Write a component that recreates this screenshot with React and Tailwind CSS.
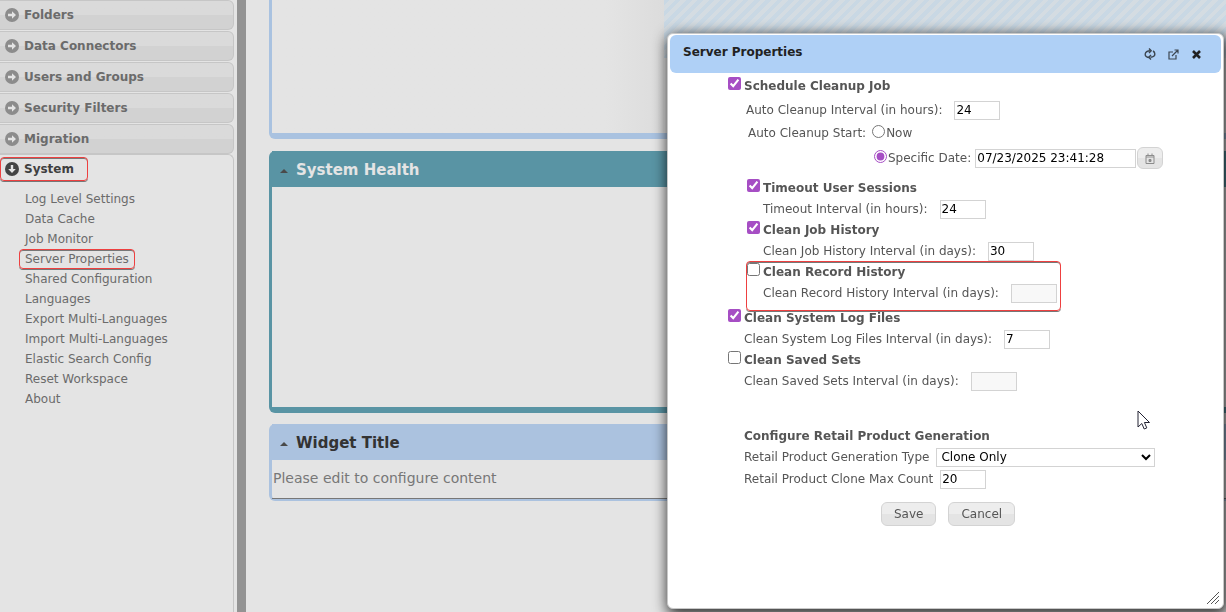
import { useState } from 'react';

const sections = ['Folders', 'Data Connectors', 'Users and Groups', 'Security Filters', 'Migration'];

const systemLinks = [
  'Log Level Settings',
  'Data Cache',
  'Job Monitor',
  'Server Properties',
  'Shared Configuration',
  'Languages',
  'Export Multi-Languages',
  'Import Multi-Languages',
  'Elastic Search Config',
  'Reset Workspace',
  'About',
];

const inputStyle = 'h-[19px] border border-[#d3d3d3] bg-white pl-px text-black outline-none disabled:bg-[#f8f8f8]';
const buttonStyle =
  'h-6 rounded-md border border-[#d3d3d3] bg-linear-to-b from-[#ededed] from-50% to-[#e4e4e4] to-50% px-3 text-[#555555]';

function CircleArrow({ down }) {
  return (
    <svg viewBox="0 0 14 14" className={down ? 'size-3.5 rotate-90 text-[#444444]' : 'size-3.5 text-[#8c8c8c]'}>
      <circle cx="7" cy="7" r="7" fill="currentColor" />
      <path d="M3 5.8h4V3.2L11 7l-4 3.8V8.2H3z" fill="#e4e4e4" />
    </svg>
  );
}

function Sidebar() {
  return (
    <nav className="w-[234px] shrink-0 text-[#6b6b6b]">
      {sections.map((name) => (
        <button
          key={name}
          type="button"
          className="mb-px flex h-[30px] w-full items-center gap-[5px] rounded-r-md border border-l-0 border-[#c6c6c6] bg-linear-to-b from-[#dadada] from-50% to-[#d2d2d2] to-50% pl-[5px] font-bold"
        >
          <CircleArrow />
          {name}
        </button>
      ))}
      <section className="-mt-px min-h-[480px] rounded-tr-md border-t border-r border-[#c6c6c6] pt-0.5">
        <button
          type="button"
          className="flex h-6 w-[88px] items-center gap-[5px] rounded-sm border border-[#ee4040] pl-1 font-bold text-[#3f3f3f] shadow-[inset_0_1px_0_#777777,0_1px_0_#777777]"
        >
          <CircleArrow down />
          System
        </button>
        <ul className="pt-2 pl-[19px]">
          {systemLinks.map((name) => (
            <li key={name} className="flex h-5">
              <a
                href="#"
                className={
                  name === 'Server Properties'
                    ? 'flex items-center rounded-sm border border-[#ee4040] px-[5px] shadow-[inset_0_1px_0_#777777,0_1px_0_#777777]'
                    : 'flex items-center border border-transparent px-[5px]'
                }
              >
                {name}
              </a>
            </li>
          ))}
        </ul>
      </section>
    </nav>
  );
}

function WidgetTitle({ children }) {
  return (
    <h2 className="flex h-9 items-center gap-2 pt-1 pl-2 text-[15px] font-bold">
      <svg viewBox="0 0 8 5" className="h-[5px] w-2">
        <path d="M4 0l4 4H0z" fill="#4a4a4a" />
      </svg>
      {children}
    </h2>
  );
}

function Dashboard() {
  return (
    <main className="min-w-0 flex-1 pl-[23px]">
      <div className="flex h-[139px] rounded-bl-md border-b-[6px] border-l-[3px] border-[#a9c2e0]">
        <div className="flex-1 bg-linear-to-r from-[#e4e4e4] from-85% to-[#dcdcdc]" />
        <div className="h-[58px] w-[562px] bg-[repeating-linear-gradient(135deg,#c9d8e4_0px,#c9d8e4_4px,#d4dce2_4px,#d4dce2_8px)]" />
      </div>
      <section className="mt-3 flex h-[262px] flex-col rounded-l-md border-b-[6px] border-l-[3px] border-[#5994a4] bg-[#e4e4e4]">
        <div className="bg-[#5994a4] text-[#e4e4e4]">
          <WidgetTitle>System Health</WidgetTitle>
        </div>
      </section>
      <section className="mt-[11px] rounded-l-md border-b-2 border-l-[3px] border-[#abc2df] bg-[#e4e4e4]">
        <div className="bg-[#abc2df] text-[#333333]">
          <WidgetTitle>Widget Title</WidgetTitle>
        </div>
        <p className="h-[39px] border-b border-[#777777] pl-px text-sm leading-[36px] text-[#777777]">
          Please edit to configure content
        </p>
      </section>
    </main>
  );
}

function CheckRow({ id, label, checked, className = '' }) {
  const [on, setOn] = useState(checked);
  return (
    <div className={`flex h-5 items-center gap-[3px] ${className}`}>
      <input
        id={id}
        type="checkbox"
        checked={on}
        onChange={(e) => setOn(e.target.checked)}
        className="mb-[5px] size-[13px] accent-[#a64ec4]"
      />
      <label htmlFor={id} className="font-bold">{label}</label>
    </div>
  );
}

function IntervalRow({ id, label, value, disabled, className = 'gap-3 pl-4' }) {
  return (
    <div className={`flex h-[22px] items-center ${className}`}>
      <label htmlFor={id}>{label}</label>
      <input id={id} type="text" defaultValue={value} disabled={disabled} className={`w-[46px] ${inputStyle}`} />
    </div>
  );
}

function ServerProperties() {
  const [start, setStart] = useState('date');
  return (
    <div
      role="dialog"
      aria-labelledby="dialog-title"
      className="fixed top-[33px] right-0.5 bottom-[3px] w-[557px] rounded-md border border-[#c8c8c8] bg-white p-0.5 pt-px text-[#555555] shadow-[2px_4px_14px_2px_rgba(0,0,0,0.8)]"
    >
      <header className="flex h-[38px] items-center justify-between rounded-md bg-[#afd0f6] pr-5 pl-[13px] text-[#222222]">
        <h1 id="dialog-title" className="pb-1 font-bold">Server Properties</h1>
        <div className="flex items-center gap-3">
          <button type="button" aria-label="Refresh">
            <svg viewBox="0 0 12 12" className="size-3" fill="none" stroke="#3c4650" strokeWidth="1.4">
              <path d="M5.500 9.500C2.500 9.500 1 8 1.200 6 1.500 4 3 2.800 6.500 2.800M6.500 9.200c3 0 4.500-1.500 4.300-3.400C10.700 4.500 10 3.500 9 3" />
              <path d="M5 .5l2.200 2.300L5 5M7 7L4.800 9.300 7 11.500" />
            </svg>
          </button>
          <button type="button" aria-label="Open in new window">
            <svg viewBox="0 0 11 11" className="size-[11px]" fill="none" stroke="#3c4650" strokeWidth="1.2">
              <path d="M5 3H1v7h7V6M4 7l5.500-5.500M6.500 1H10v3.500" />
            </svg>
          </button>
          <button type="button" aria-label="Close" className="ml-px">
            <svg viewBox="0 0 9 9" className="size-[9px]" stroke="#222222" strokeWidth="2.600">
              <path d="M1 1l7 7M8 1L1 8" />
            </svg>
          </button>
        </div>
      </header>

      <form onSubmit={(e) => e.preventDefault()} className="pl-[58px]">
        <CheckRow id="schedule" label="Schedule Cleanup Job" checked className="mt-[3px] mb-[3px]" />
        <IntervalRow id="auto" label="Auto Cleanup Interval (in hours):" value="24" className="gap-3 pl-[18px]" />
        <div className="mt-0.5 flex h-5 items-center pl-5">
          <span className="mr-1.5">Auto Cleanup Start:</span>
          <input
            id="now"
            type="radio"
            name="start"
            checked={start === 'now'}
            onChange={() => setStart('now')}
            className="mb-1 size-[13px] accent-[#a64ec4]"
          />
          <label htmlFor="now" className="pl-px">Now</label>
        </div>
        <div className="flex h-[30px] items-center pl-[146px]">
          <input
            id="specific"
            type="radio"
            name="start"
            checked={start === 'date'}
            onChange={() => setStart('date')}
            className="mb-1 size-[13px] accent-[#a64ec4]"
          />
          <label htmlFor="specific" className="mr-1 pl-px">Specific Date:</label>
          <input
            type="text"
            aria-label="Cleanup date"
            defaultValue="07/23/2025 23:41:28"
            className={`w-[161px] ${inputStyle}`}
          />
          <button
            type="button"
            aria-label="Pick date"
            className="ml-px flex h-[22px] w-[26px] items-center justify-center rounded-md border border-[#d3d3d3] bg-linear-to-b from-[#ededed] from-50% to-[#e4e4e4] to-50%"
          >
            <svg viewBox="0 0 10 11" className="h-[11px] w-2.5" fill="none" stroke="#8c8c8c">
              <path d="M1 2.500h8v8H1zM1 4h8M3 .5v2M7 .5v2" />
              <path d="M4 6.500h2v2H4z" fill="#8c8c8c" />
            </svg>
          </button>
        </div>

        <div className="mt-[5px] pl-[19px]">
          <CheckRow id="timeout" label="Timeout User Sessions" checked />
          <IntervalRow id="timeout-hours" label="Timeout Interval (in hours):" value="24" />
          <CheckRow id="job" label="Clean Job History" checked />
          <IntervalRow id="job-days" label="Clean Job History Interval (in days):" value="30" />
          <div className="relative w-[315px]">
            <CheckRow id="record" label="Clean Record History" checked={false} />
            <IntervalRow id="record-days" label="Clean Record History Interval (in days):" disabled />
            <div className="pointer-events-none absolute -top-px -bottom-[7px] -left-px w-full rounded-sm border border-[#ee4040] shadow-[inset_0_1px_0_#777777,0_1px_0_#777777]" />
          </div>
        </div>

        <CheckRow id="log" label="Clean System Log Files" checked className="mt-1" />
        <IntervalRow id="log-days" label="Clean System Log Files Interval (in days):" value="7" />
        <CheckRow id="sets" label="Clean Saved Sets" checked={false} />
        <IntervalRow id="sets-days" label="Clean Saved Sets Interval (in days):" disabled />

        <h2 className="mt-[34px] h-5 pl-4 leading-5 font-bold">Configure Retail Product Generation</h2>
        <div className="flex h-[22px] items-center gap-[7px] pl-4">
          <label htmlFor="type">Retail Product Generation Type</label>
          <select id="type" className="h-[19px] w-[219px] border border-[#d3d3d3] bg-white text-black">
            <option>Clone Only</option>
          </select>
        </div>
        <IntervalRow id="max" label="Retail Product Clone Max Count" value="20" className="gap-[7px] pl-4" />
        <div className="mt-3 flex gap-3 pl-[153px]">
          <button type="submit" className={buttonStyle}>Save</button>
          <button type="button" className={buttonStyle}>Cancel</button>
        </div>
      </form>

      <svg viewBox="0 0 12 12" className="absolute right-1 bottom-1 size-3" stroke="#555555">
        <path d="M0 12L12 0M4 12l8-8M8 12l4-4" />
      </svg>
      <svg viewBox="0 0 13 20" className="absolute top-[376px] right-[73px] h-5 w-[13px]" fill="#ffffff" stroke="#222233">
        <path d="M1 1v16l3.800-3.500L7.200 19l2.600-1.100-2.400-5.400h5.100z" />
      </svg>
    </div>
  );
}

export default function App() {
  return (
    <div className="flex h-screen overflow-hidden bg-[#e4e4e4] font-['Verdana','DejaVu_Sans',sans-serif] text-xs">
      <Sidebar />
      <div className="ml-[3px] w-[9px] shrink-0 bg-[#939393]" />
      <Dashboard />
      <ServerProperties />
    </div>
  );
}
